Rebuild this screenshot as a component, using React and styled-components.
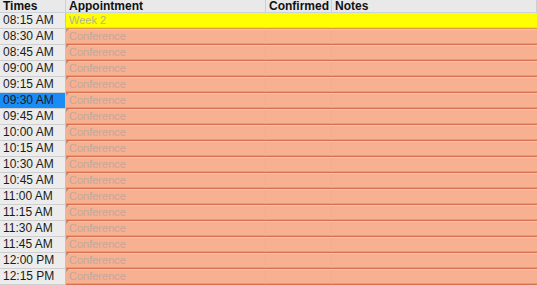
import styled, { createGlobalStyle } from "styled-components";

const GlobalStyle = createGlobalStyle`
    html, body {
        margin: 0;
        padding: 0;
        background: #ffffff;
        overflow: hidden;
    }
    body {
        font-family: "Liberation Sans", Arial, sans-serif;
    }
`;

const Sheet = styled.div`
    width: 537px;
    height: 285px;
    overflow: hidden;
    background: #f7b092;
`;

const Columns = `66px 200px 66px 1fr`;

const HeaderRow = styled.div`
    display: grid;
    grid-template-columns: ${Columns};
    height: 12px;
    background: #e9e9e9;
    border-bottom: 1px solid #c9d2dd;
`;

const HeaderCell = styled.div`
    font-size: 12px;
    font-weight: bold;
    line-height: 13px;
    color: #111;
    padding-left: 3px;
    border-right: 1px solid #cfcfcf;
    white-space: nowrap;
    overflow: hidden;
`;

const Row = styled.div`
    display: grid;
    grid-template-columns: ${Columns};
    height: 16px;
`;

const TimeCell = styled.div`
    box-sizing: border-box;
    font-size: 12px;
    line-height: 15px;
    padding-left: 3px;
    color: #1a1a1a;
    background: ${({ $selected }) => ($selected ? "#1a8cf5" : "#ececec")};
    border-bottom: 1px solid #cfcfcf;
    border-right: 1px solid #c4c4c4;
    white-space: nowrap;
`;

const Slot = styled.div`
    position: relative;
    box-sizing: border-box;
    grid-column: 2 / 5;
    display: grid;
    grid-template-columns: 200px 66px 1fr;
    background: ${({ $kind }) => ($kind === "week" ? "#ffff00" : "#f7b092")};
    border-top: 1px solid ${({ $kind }) => ($kind === "week" ? "#ffff00" : "#f9c2aa")};
    border-bottom: 1px solid ${({ $kind }) => ($kind === "week" ? "#dc9a48" : "#d6714f")};
    box-shadow: inset 0 -1px 0 ${({ $kind }) => ($kind === "week" ? "#f2e030" : "#ea987a")};

    &::before {
        content: "";
        position: absolute;
        left: 0;
        top: -1px;
        border-top: 3px solid ${({ $kind }) => ($kind === "week" ? "transparent" : "#a89a94")};
        border-right: 3px solid transparent;
    }
`;

const SlotCell = styled.div`
    font-size: 11px;
    line-height: 12px;
    padding-left: 3px;
    color: ${({ $kind }) => ($kind === "week" ? "#b4b48a" : "#c0a89d")};
    border-right: 1px solid ${({ $kind }) => ($kind === "week" ? "#f0ef70" : "#f4ab8e")};
    white-space: nowrap;
    overflow: hidden;

    &:last-child {
        border-right: none;
    }
`;

const times = [
    "08:15 AM", "08:30 AM", "08:45 AM", "09:00 AM", "09:15 AM", "09:30 AM",
    "09:45 AM", "10:00 AM", "10:15 AM", "10:30 AM", "10:45 AM", "11:00 AM",
    "11:15 AM", "11:30 AM", "11:45 AM", "12:00 PM", "12:15 PM",
];

const App = () => {
    return (
        <>
            <GlobalStyle />
            <Sheet>
                <HeaderRow>
                    <HeaderCell>Times</HeaderCell>
                    <HeaderCell>Appointment</HeaderCell>
                    <HeaderCell>Confirmed</HeaderCell>
                    <HeaderCell>Notes</HeaderCell>
                </HeaderRow>
                {times.map((time, i) => {
                    const kind = i === 0 ? "week" : "conf";
                    return (
                        <Row key={time}>
                            <TimeCell $selected={time === "09:30 AM"}>{time}</TimeCell>
                            <Slot $kind={kind}>
                                <SlotCell $kind={kind}>{i === 0 ? "Week 2" : "Conference"}</SlotCell>
                                <SlotCell $kind={kind} />
                                <SlotCell $kind={kind} />
                            </Slot>
                        </Row>
                    );
                })}
            </Sheet>
        </>
    );
};

export default App;
